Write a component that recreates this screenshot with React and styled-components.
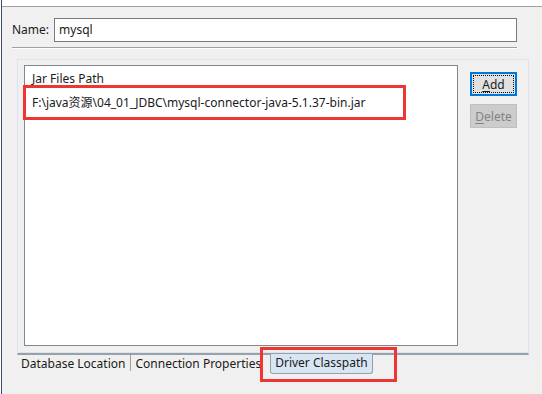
import React from 'react'
import styled, { createGlobalStyle } from 'styled-components'

const Global = createGlobalStyle`
  html, body { margin: 0; padding: 0; background: #ffffff; }
  body { font-family: "Noto Sans", "Noto Sans CJK SC", sans-serif; font-size: 12px; color: #1a1a1a; }
`

const Frame = styled.div`
  position: relative;
  width: 541px;
  height: 394px;
  margin-left: 1px;
  border-left: 1px solid #3f4a6b;
  box-sizing: border-box;
  background: #f0f0f0;
  display: flex;
  flex-direction: column;
  overflow: hidden;
`

const TopStrip = styled.div`
  height: 6px;
  background: #ffffff;
  border-bottom: 1px solid #a0a0a0;
  flex: none;
`

const NameRow = styled.div`
  display: flex;
  align-items: center;
  gap: 5px;
  margin: 11px 25px 0 10px;
  height: 24px;
`

const Label = styled.span`
  line-height: 24px;
`

const TextInput = styled.div`
  flex: 1;
  height: 24px;
  box-sizing: border-box;
  border: 1px solid #7a7a7a;
  background: #ffffff;
  padding-left: 4px;
  line-height: 21px;
`

const Separator = styled.div`
  margin: 5px 25px 0 10px;
  height: 1px;
  background: #a0a0a0;
  border-bottom: 1px solid #ffffff;
`

const Panel = styled.div`
  margin: 10px 0 0 15px;
  width: 512px;
  height: 296px;
  box-sizing: border-box;
  border: 1px solid #d9e4f1;
  border-bottom: 2px solid #9aa0a8;
  box-shadow: inset 0 -1px 0 #d9e4f1;
  padding: 5px 11px 7px 6px;
  display: flex;
  gap: 12px;
`

const ListBox = styled.div`
  flex: 1;
  background: #ffffff;
  border: 1px solid #828790;
  padding: 4px 7px;
  display: flex;
  flex-direction: column;
`

const ListHeader = styled.div`
  line-height: 17px;
`

const ListRow = styled.div`
  margin-top: 7px;
  line-height: 17px;
  white-space: nowrap;
`

const Buttons = styled.div`
  display: flex;
  flex-direction: column;
  gap: 8px;
  padding-top: 7px;
  width: 47px;
`

const Button = styled.div`
  height: 24px;
  box-sizing: border-box;
  display: flex;
  align-items: center;
  justify-content: center;
  position: relative;
  background: ${p => (p.disabled ? '#cccccc' : '#e1e1e1')};
  border: ${p => (p.focused ? '2px solid #0078d7' : '1px solid #bfbfbf')};
  color: ${p => (p.disabled ? '#838383' : '#1a1a1a')};
  font-size: 12px;

  ${p => p.focused && `
    &::after {
      content: "";
      position: absolute;
      inset: 1px;
      border: 1px dotted #111111;
    }
  `}

  u { text-decoration: underline; text-underline-offset: 2px; }
`

const Tabs = styled.div`
  display: flex;
  align-items: flex-start;
  margin-left: 15px;
  height: 20px;
`

const Tab = styled.div`
  padding: 0 5px 0 4px;
  line-height: 17px;
  height: 16px;
  border-right: ${p => (p.divider ? '1px solid #a0a0a0' : 'none')};
  white-space: nowrap;
`

const ActiveTab = styled.div`
  margin-left: 4px;
  margin-top: -1px;
  height: 20px;
  box-sizing: border-box;
  padding: 0 4px;
  line-height: 18px;
  background: #d8e5f3;
  border: 1px solid #9aa0a8;
  border-top: none;
  border-radius: 0 0 3px 3px;
  white-space: nowrap;
`

const Highlight = styled.div`
  position: absolute;
  border: 3px solid #ef3434;
  box-sizing: border-box;
  pointer-events: none;
`

export default function App() {
  return (
    <>
      <Global />
      <Frame>
        <TopStrip />
        <NameRow>
          <Label>Name:</Label>
          <TextInput>mysql</TextInput>
        </NameRow>
        <Separator />
        <Panel>
          <ListBox>
            <ListHeader>Jar Files Path</ListHeader>
            <ListRow>F:\java资源\04_01_JDBC\mysql-connector-java-5.1.37-bin.jar</ListRow>
          </ListBox>
          <Buttons>
            <Button focused><span><u>A</u>dd</span></Button>
            <Button disabled><span><u>D</u>elete</span></Button>
          </Buttons>
        </Panel>
        <Tabs>
          <Tab divider>Database Location</Tab>
          <Tab>Connection Properties</Tab>
          <ActiveTab>Driver Classpath</ActiveTab>
        </Tabs>
        <Highlight style={{ left: 21, top: 85, width: 383, height: 35 }} />
        <Highlight style={{ left: 258, top: 347, width: 137, height: 35 }} />
      </Frame>
    </>
  )
}
